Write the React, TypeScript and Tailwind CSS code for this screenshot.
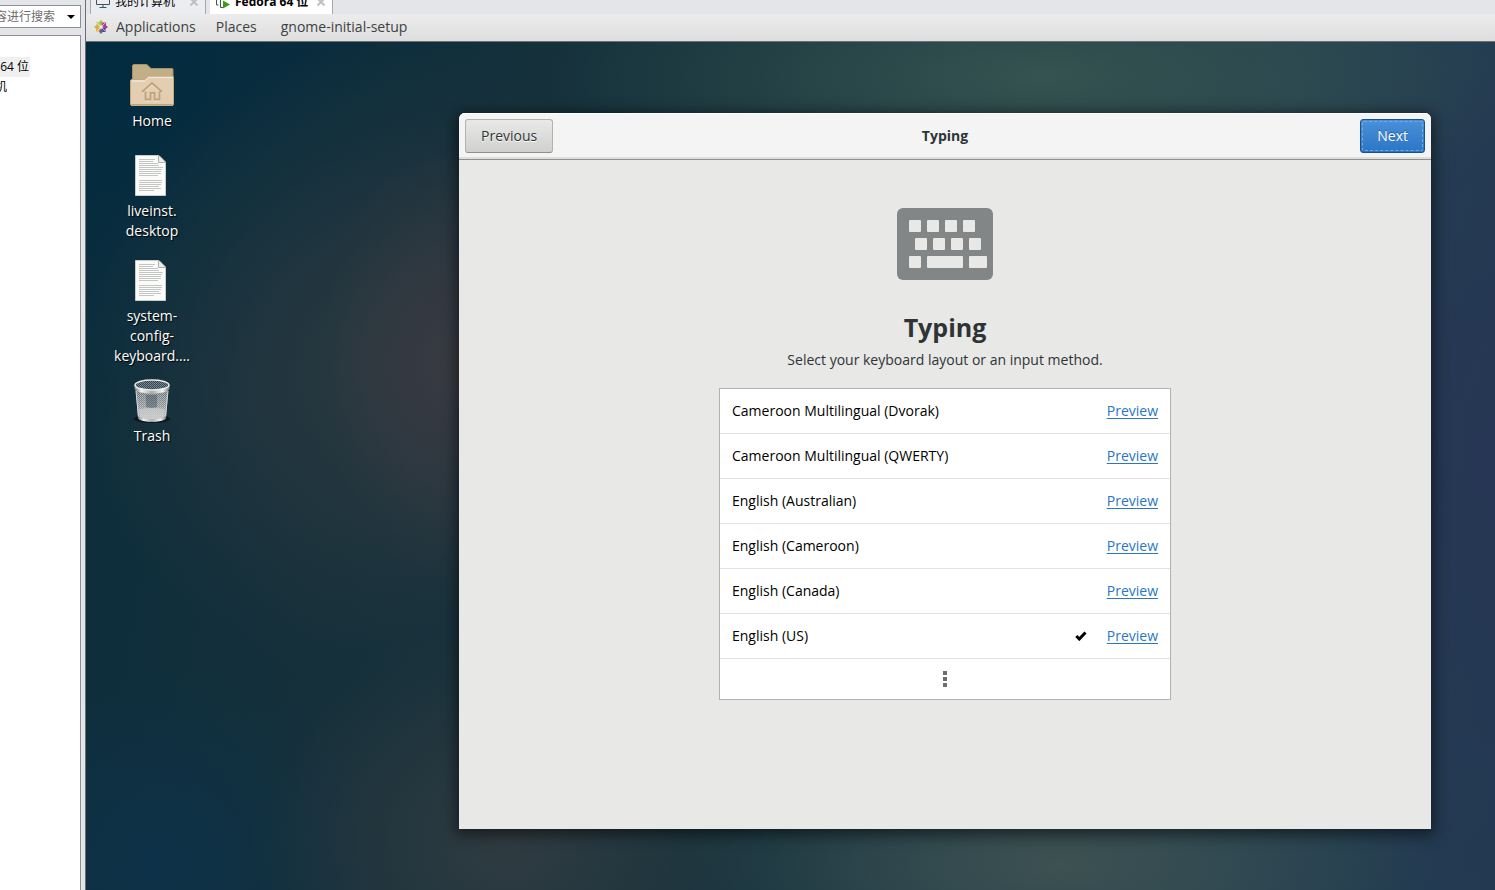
import React from "react";

const layouts = [
  { name: "Cameroon Multilingual (Dvorak)" },
  { name: "Cameroon Multilingual (QWERTY)" },
  { name: "English (Australian)" },
  { name: "English (Cameroon)" },
  { name: "English (Canada)" },
  { name: "English (US)", selected: true },
];

function ComputerIcon() {
  return (
    <svg width="16" height="16" viewBox="0 0 16 16" fill="none" stroke="#3d5463">
      <path d="M1.500 2.500h13v8h-13zM8 11v2.500M4.500 13.500h7" />
    </svg>
  );
}

function RunningVmIcon() {
  return (
    <svg width="16" height="16" viewBox="0 0 16 16" fill="none" stroke="#3d5463">
      <path d="M1.500 2v9h2M5.500 2v11.500h3" />
      <path d="M8 6.500l7 4-7 4z" fill="#3f9c16" stroke="none" />
    </svg>
  );
}

function CloseIcon() {
  return (
    <svg width="8" height="8" viewBox="0 0 8 8" stroke="#c0c0c0" strokeWidth="2">
      <path d="M.5.5l7 7M7.500.5l-7 7" />
    </svg>
  );
}

function PinwheelIcon() {
  const arms = [
    { corner: "#a8418f", spike: "#9ab83a" },
    { corner: "#4b4792", spike: "#a93c8c" },
    { corner: "#efb03c", spike: "#6b5a9e" },
    { corner: "#b7cf6a", spike: "#e6a53a" },
  ];
  return (
    <svg width="14" height="14" viewBox="0 0 14 14">
      {arms.map(({ corner, spike }, i) => (
        <g key={corner} transform={`rotate(${i * 90} 7 7)`}>
          <path d="M8 6V2.500h4V6z" fill={corner} />
          <path d="M5 2.500L7 0l2 2.500L7 6z" fill={spike} />
          <path d="M7 7l4-4" stroke="#ece8f0" strokeWidth=".7" />
        </g>
      ))}
    </svg>
  );
}

function HomeFolderIcon() {
  return (
    <svg width="48" height="48" viewBox="0 0 48 48">
      <path d="M4.500 6q0-1.500 1.500-1.500h12q1 0 2 1l3 3h21q1 0 1 1V25h-40.500z" fill="#c1af89" stroke="#a99262" />
      <path d="M2.500 21q0-1.500 1.500-1.500h12q1 0 2-1l2-1.500q.8-.7 2-.7h22q1.500 0 1.500 1.500v27H2.500z" fill="#e3ceb2" stroke="#c5a77c" />
      <path d="M3.500 21h13l4-3.700h24.500" stroke="#f7eee1" fill="none" />
      <path d="M3 45.500h42" stroke="#ccb083" />
      <g fill="none" strokeWidth="2">
        <path d="M14 33l10-9L34 33M17.500 32.500V40.500h5V34h4v6.500h5V32.500" stroke="#f2e4d0" />
        <path d="M14 32l10-9L34 32M17.500 31.500V39.500h5V33h4v6.500h5V31.500" stroke="#bfa37f" />
      </g>
    </svg>
  );
}

function DocumentIcon() {
  const lines = [16, 14, 19, 20, 24, 23, 22, 22, 19, 0, 23, 23, 22, 20, 22, 15];
  return (
    <svg width="48" height="48" viewBox="0 0 48 48">
      <path d="M7.500 5.500h23l7 7v33h-30z" fill="#fbfbfa" stroke="#c9cccb" />
      <path d="M30.500 5.500v7h7" fill="#ededec" stroke="#aeb1b0" />
      <path d="M31 5.500l6.500 6.500" stroke="#d4d6d5" />
      {lines.map((w, i) =>
        w > 0 ? <rect key={i} x="11" y={9 + i * 2 + (i > 9 ? 1 : 0)} width={w} height="1" fill="#c4c6c5" /> : null
      )}
    </svg>
  );
}

function TrashIcon() {
  return (
    <svg width="48" height="48" viewBox="0 0 48 48">
      <defs>
        <linearGradient id="metal" x1="0" x2="1" y1="0" y2="0">
          <stop offset="0" stopColor="#777a78" />
          <stop offset=".2" stopColor="#f3f3f2" />
          <stop offset=".5" stopColor="#a9acaa" />
          <stop offset=".8" stopColor="#f6f6f5" />
          <stop offset="1" stopColor="#747775" />
        </linearGradient>
        <linearGradient id="body" x1="0" x2="0" y1="0" y2="1">
          <stop offset="0" stopColor="#5d6a72" />
          <stop offset="1" stopColor="#b4b8b6" />
        </linearGradient>
        <pattern id="mesh" width="2" height="2" patternUnits="userSpaceOnUse">
          <rect width="1" height="1" fill="#e2e4e2" />
          <rect x="1" y="1" width="1" height="1" fill="#c6c9c7" />
        </pattern>
      </defs>
      <g transform="translate(0 2)">
        <ellipse cx="24" cy="42" rx="18" ry="4" fill="#000" opacity=".5" />
        <path d="M7.500 10L10 40c0 6 28 6 28 0l2.500-30z" fill="url(#body)" />
        <path d="M7.500 10L10 40c0 6 28 6 28 0l2.500-30z" fill="url(#mesh)" opacity=".6" />
        <path d="M11 32q13-3 26 0l-1 8q-12 5-24 0z" fill="#d9dbd9" opacity=".5" />
        <path d="M18 18h11v12q-5 2-11 0z" fill="#3c5160" opacity=".45" />
        <path d="M8 14L10.500 40M40 14l-2.500 26" fill="none" stroke="#d7d9d8" />
        <path d="M10 38.500c1 5 27 5 28 0V41c-1 5-27 5-28 0z" fill="url(#metal)" />
        <path d="M6.500 8v4c2 6 33 6 35 0V8z" fill="url(#metal)" />
        <ellipse cx="24" cy="8" rx="17" ry="5" fill="#304656" stroke="#ededec" strokeWidth="1.500" />
        <ellipse cx="24" cy="8" rx="16" ry="4" fill="url(#mesh)" opacity=".45" />
      </g>
    </svg>
  );
}

function KeyboardIcon() {
  const keys = [
    [12, 12, 12], [30, 12, 12], [48, 12, 12], [66, 12, 12],
    [18, 30, 12], [36, 30, 12], [54, 30, 12], [72, 30, 12],
    [12, 48, 12], [30, 48, 36], [72, 48, 18],
  ];
  return (
    <svg width="96" height="72" viewBox="0 0 96 72">
      <rect width="96" height="72" rx="6" fill="#828686" />
      {keys.map(([x, y, w]) => (
        <rect key={`${x}-${y}`} x={x} y={y} width={w} height="12" rx="1" fill="#e8e8e6" />
      ))}
    </svg>
  );
}

function CheckIcon() {
  return (
    <svg width="12" height="10" viewBox="0 0 12 10" fill="none" stroke="#000" strokeWidth="3" aria-label="Selected">
      <path d="M1.300 5l3 3L10.500 1.500" />
    </svg>
  );
}

function DesktopItem({ icon, label, className }: { icon: React.ReactNode; label: string[]; className: string }) {
  return (
    <li className={className}>
      <button className="flex w-full flex-col items-center text-white [text-shadow:1px_1px_1px_#000]">
        {icon}
        <span className="mt-[3px] flex flex-col">
          {label.map((line) => (
            <span key={line}>{line}</span>
          ))}
        </span>
      </button>
    </li>
  );
}

function SetupWindow() {
  return (
    <section className="absolute top-[71px] right-16 flex min-h-[716px] w-[972px] flex-col overflow-hidden rounded-t-md bg-[#e8e8e6] text-[#2e3436] shadow-[0_3px_14px_3px_rgba(0,0,0,0.5)]">
      <header className="grid h-[47px] grid-cols-3 items-center border-b border-[#8f908e] bg-[#f4f4f4] px-1.5 shadow-[inset_0_1px_#fff,inset_0_-2px_#dededc]">
        <button className="h-[34px] justify-self-start rounded-[3px] border border-[#b2b3ae] border-b-[#8f908a] bg-linear-to-b from-[#e9e9e8] to-[#d0d0ce] px-[15px] [text-shadow:0_1px_#fff]">
          Previous
        </button>
        <h1 className="text-center font-bold">Typing</h1>
        <button className="h-[34px] justify-self-end rounded-[3px] border border-[#1c5187] bg-linear-to-b from-[#4a90d9] to-[#2a76c6] p-px text-white [text-shadow:0_-1px_#1f5c9c]">
          <span className="flex h-full items-center rounded-xs border border-dashed border-[#74abe4] px-3.5">Next</span>
        </button>
      </header>
      <div className="flex flex-col items-center pt-12">
        <KeyboardIcon />
        <h2 className="mt-[27px] text-[25px] leading-10 font-bold">Typing</h2>
        <p className="mt-[3px]">Select your keyboard layout or an input method.</p>
        <ul className="mt-[18px] w-[452px] border border-[#b0b3b1] bg-white text-black">
          {layouts.map((layout) => (
            <li key={layout.name} className="flex h-[45px] items-center border-b border-[#e2e2e2] px-3">
              <span className="flex-1">{layout.name}</span>
              {layout.selected && <CheckIcon />}
              <a href="#preview" className="ml-5 text-[#2a76c6] underline underline-offset-2">Preview</a>
            </li>
          ))}
          <li>
            <button aria-label="More layouts" className="flex h-10 w-full items-center justify-center">
              <svg width="4" height="16" viewBox="0 0 4 16" fill="#6c6e6f">
                <path d="M0 0h4v4H0zM0 6h4v4H0zM0 12h4v4H0z" />
              </svg>
            </button>
          </li>
        </ul>
      </div>
    </section>
  );
}

export default function App() {
  return (
    <div className="flex h-screen overflow-hidden bg-[#e4e5e8] font-['Open_Sans','Noto_Sans_CJK_SC',sans-serif] text-[14px] leading-5">
      <aside className="flex w-[85px] shrink-0 flex-col pr-1 text-[12px] text-black">
        <div className="mt-[5px] flex h-[23px] w-full items-center justify-between border border-l-0 border-[#8b8f97] bg-white pr-[5px]">
          <span className="flex w-[55px] justify-end overflow-hidden whitespace-nowrap text-[#6d6d6d]">容进行搜索</span>
          <svg width="8" height="4" viewBox="0 0 8 4"><path d="M0 0h8L4 4z" /></svg>
        </div>
        <div className="mt-[7px] flex flex-1 flex-col items-start border-t border-r border-[#8b8f97] bg-white pt-[21px]">
          <span className="flex h-5 w-[30px] justify-end overflow-hidden bg-[#f0f0f0] pr-px whitespace-nowrap">64 位</span>
          <span className="flex h-5 w-[7px] justify-end overflow-hidden">机</span>
        </div>
      </aside>
      <div className="flex min-w-0 flex-1 flex-col border-l border-[#6b6e70]">
        <div className="flex h-3.5 shrink-0 items-end overflow-hidden pl-1 text-[12px] text-black">
          <div className="flex h-5 w-[116px] items-center gap-1 border-x border-[#a5a8ad] bg-[#ecedf0] pr-[7px] pb-1 pl-1">
            <ComputerIcon />
            <span className="flex-1">我的计算机</span>
            <CloseIcon />
          </div>
          <div className="ml-1 flex h-5 w-[123px] items-center gap-1 border-r border-[#a5a8ad] bg-white pr-[7px] pb-1 pl-[5px] font-bold">
            <RunningVmIcon />
            <span className="flex-1">Fedora 64 位</span>
            <CloseIcon />
          </div>
        </div>
        <nav className="flex h-7 shrink-0 items-center gap-5 border-b border-[#6d7070] bg-linear-to-b from-[#ececec] to-[#dedede] px-2 pb-px text-[#3c4142]">
          <button className="flex items-center gap-2"><PinwheelIcon />Applications</button>
          <button>Places</button>
          <button className="ml-1">gnome-initial-setup</button>
        </nav>
        <main className="relative flex-1 overflow-hidden bg-[radial-gradient(ellipse_500px_150px_at_68%_4%,#355350_0%,transparent_100%),radial-gradient(ellipse_380px_130px_at_69%_97%,#3d5152_0%,transparent_100%),radial-gradient(ellipse_200px_600px_at_100%_50%,#263654_0%,transparent_100%),radial-gradient(ellipse_130px_220px_at_26%_38%,#393a42_0%,transparent_100%),radial-gradient(ellipse_330px_320px_at_22%_38%,#2b3940_0%,transparent_100%),radial-gradient(ellipse_260px_220px_at_30%_94%,#303b41_0%,transparent_100%),radial-gradient(ellipse_220px_200px_at_5%_97%,#0d3148_0%,transparent_100%),radial-gradient(ellipse_450px_400px_at_0%_0%,#022b40_0%,transparent_100%),linear-gradient(100deg,#0b2d3c_0%,#142f3a_20%,#17333d_50%,#244150_78%,#213a50_100%)]">
          <ul className="ml-4 flex w-[100px] flex-col">
            <DesktopItem className="mt-[18px]" icon={<HomeFolderIcon />} label={["Home"]} />
            <DesktopItem className="mt-[19px]" icon={<DocumentIcon />} label={["liveinst.", "desktop"]} />
            <DesktopItem className="mt-3.5" icon={<DocumentIcon />} label={["system-", "config-", "keyboard.…"]} />
            <DesktopItem className="mt-[9px]" icon={<TrashIcon />} label={["Trash"]} />
          </ul>
          <SetupWindow />
        </main>
      </div>
    </div>
  );
}
